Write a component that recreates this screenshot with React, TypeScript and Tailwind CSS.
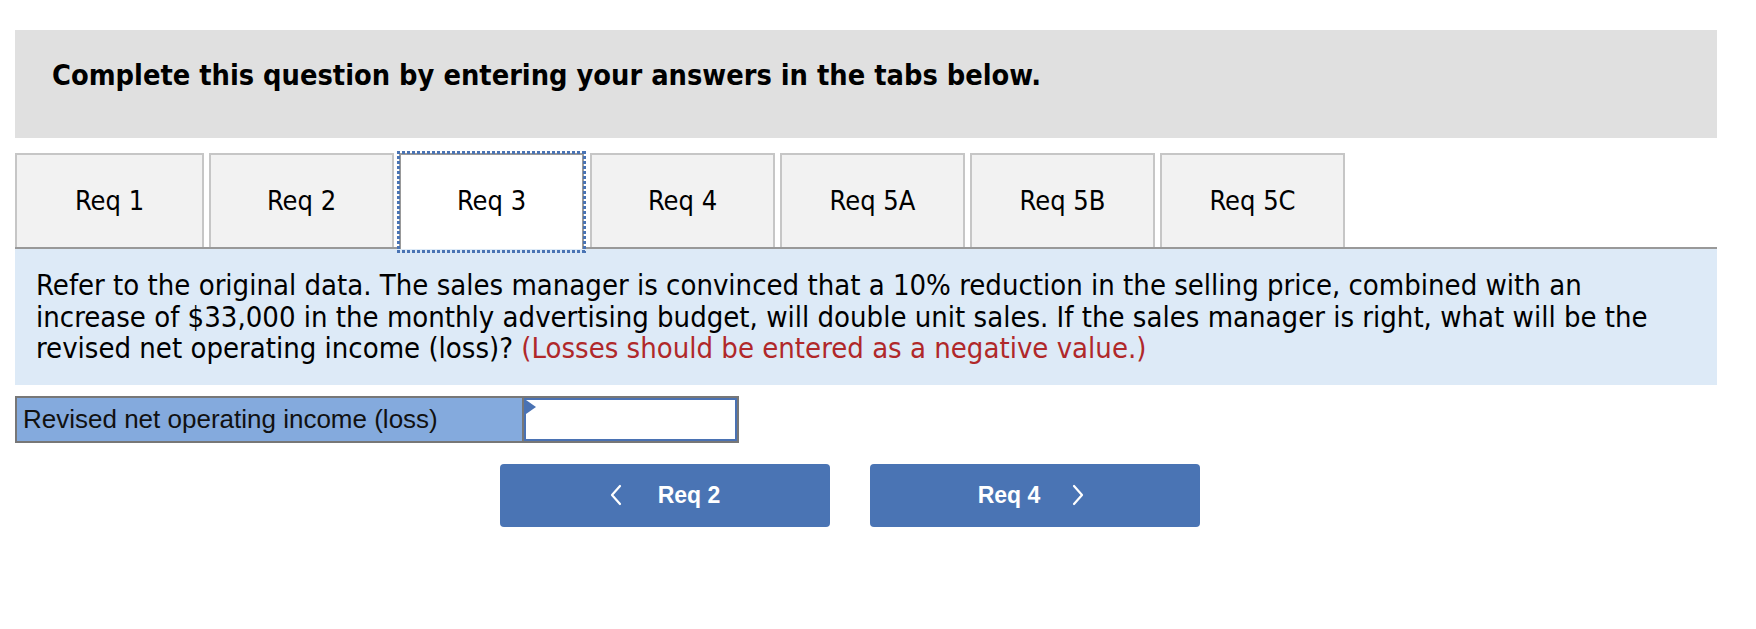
import React from "react";

const tabs = ["Req 1", "Req 2", "Req 3", "Req 4", "Req 5A", "Req 5B", "Req 5C"];
const active = "Req 3";

const tahoma = { fontFamily: '"DejaVu Sans Condensed", "DejaVu Sans", sans-serif' };
const helv = { fontFamily: '"Liberation Sans", Arial, sans-serif' };

function Chevron({ dir }: { dir: "left" | "right" }) {
  return (
    <svg width="12" height="22" viewBox="0 0 12 22" className="shrink-0">
      <polyline
        points={dir === "left" ? "10,2 2,11 10,20" : "2,2 10,11 2,20"}
        fill="none"
        stroke="white"
        strokeWidth="2.2"
        strokeLinecap="round"
        strokeLinejoin="round"
      />
    </svg>
  );
}

// focus ring drawn as small square dashes, like the reference
function FocusRing() {
  return (
    <div className="pointer-events-none absolute -inset-[4px]">
      <div className="absolute left-0 right-0 top-0 h-[3px] bg-[repeating-linear-gradient(90deg,#4a74b4_0_3px,transparent_3px_5px)]" />
      <div className="absolute left-0 right-0 bottom-0 h-[3px] bg-[repeating-linear-gradient(90deg,#4a74b4_0_3px,transparent_3px_5px)]" />
      <div className="absolute top-0 bottom-0 left-0 w-[3px] bg-[repeating-linear-gradient(180deg,#4a74b4_0_3px,transparent_3px_5px)]" />
      <div className="absolute top-0 bottom-0 right-0 w-[3px] bg-[repeating-linear-gradient(180deg,#4a74b4_0_3px,transparent_3px_5px)]" />
    </div>
  );
}

export default function App() {
  return (
    <div className="w-full h-[629px] bg-white pt-[30px] pl-[15px] pr-[39px]">
      {/* instructions banner */}
      <div className="h-[108px] bg-[#e0e0e0] pl-[37px] pt-[29px]">
        <p className="text-[28.7px] leading-[32px] font-bold text-black" style={tahoma}>
          Complete this question by entering your answers in the tabs below.
        </p>
      </div>

      {/* tabs */}
      <div className="mt-[15px] flex items-end gap-[5px] border-b-2 border-[#999999]">
        {tabs.map((t, i) =>
          t === active ? (
            <div
              key={t}
              className="relative w-[185px] h-[96px] -mb-[2px] pb-[2px] mr-[1px] flex items-center justify-center border-2 border-b-0 border-[#999999] bg-white text-[27px] text-black"
              style={tahoma}
            >
              {t}
              <FocusRing />
            </div>
          ) : (
            <div
              key={t}
              className={
                i === 0
                  ? "w-[189px] h-[94px] flex items-center justify-center border-2 border-b-0 border-[#c6c6c6] bg-[#f2f2f2] text-[27px] text-black"
                  : "w-[185px] h-[94px] flex items-center justify-center border-2 border-b-0 border-[#c6c6c6] bg-[#f2f2f2] text-[27px] text-black"
              }
              style={tahoma}
            >
              {t}
            </div>
          )
        )}
      </div>

      {/* question text */}
      <div className="bg-[#ddeaf7] pt-[21px] pb-[20px] pl-[21px] pr-[10px]">
        <p className="text-[29px] leading-[31.5px] text-black whitespace-nowrap" style={tahoma}>
          Refer to the original data. The sales manager is convinced that a 10% reduction in the selling price, combined with an
          <br />
          increase of $33,000 in the monthly advertising budget, will double unit sales. If the sales manager is right, what will be the
          <br />
          revised net operating income (loss)?{" "}
          <span className="text-[#b0282a]">(Losses should be entered as a negative value.)</span>
        </p>
      </div>

      {/* answer row */}
      <div className="mt-[11px] flex w-[724px] h-[47px] border-2 border-[#777777]">
        <div
          className="flex-1 flex items-center bg-[#84aadd] border-r-2 border-[#777777] pl-[6px] text-[26px] text-[#111]"
          style={helv}
        >
          Revised net operating income (loss)
        </div>
        <div className="relative w-[213px] border-2 border-[#4a72b3] bg-white">
          <svg width="10" height="14" viewBox="0 0 10 14" className="absolute left-0 top-0">
            <polygon points="0,0 10,7 0,14" fill="#4a72b3" />
          </svg>
        </div>
      </div>

      {/* navigation */}
      <div className="mt-[21px] flex gap-[40px] pl-[485px]">
        <button
          className="w-[330px] h-[63px] rounded-[4px] bg-[#4a74b4] flex items-center justify-center gap-[36px] text-white text-[23px] font-bold"
          style={helv}
        >
          <Chevron dir="left" />
          <span>Req 2</span>
        </button>
        <button
          className="w-[330px] h-[63px] rounded-[4px] bg-[#4a74b4] flex items-center justify-center gap-[32px] pr-[8px] text-white text-[23px] font-bold"
          style={helv}
        >
          <span>Req 4</span>
          <Chevron dir="right" />
        </button>
      </div>
    </div>
  );
}
